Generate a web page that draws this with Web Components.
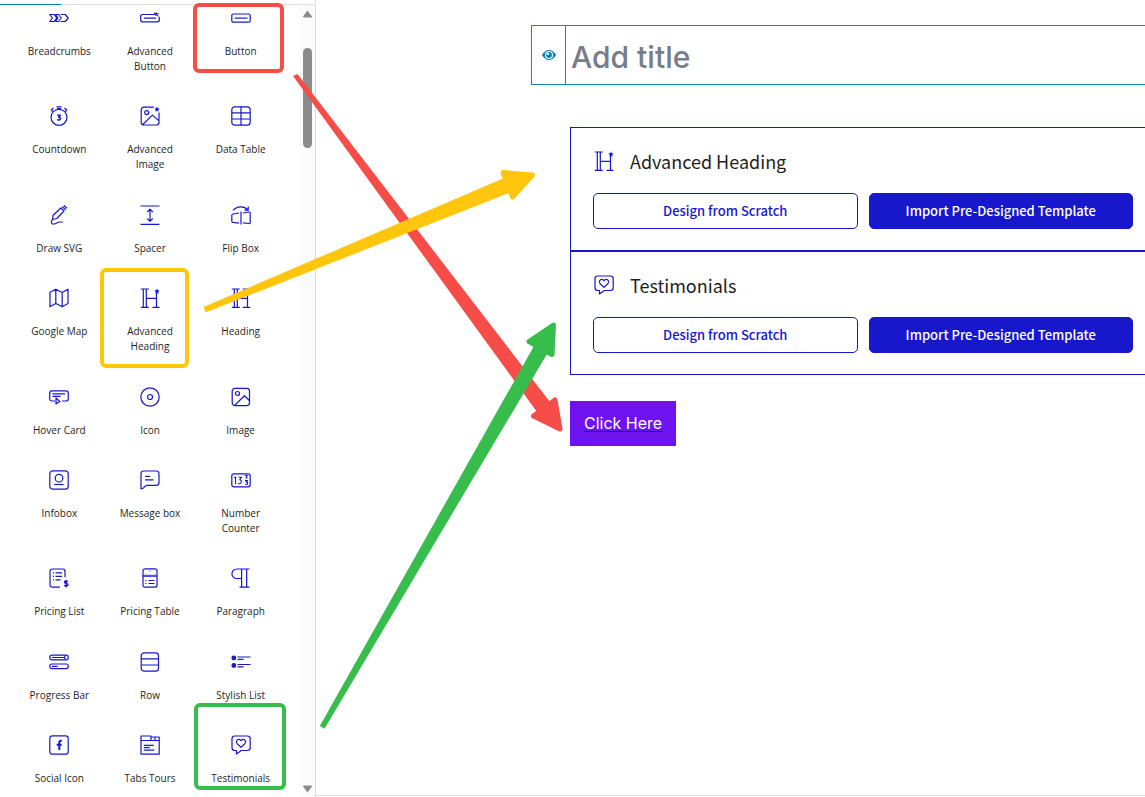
<!DOCTYPE html>
<html lang="en">
<head>
<meta charset="utf-8">
<title>Block editor</title>
<style>
  body { margin: 0; background: #fff; font-family: "Noto Sans CJK SC", sans-serif; color: #1e1e1e; }
</style>
</head>
<body>
<editor-shell>
  <block-panel slot="panel">
    <block-item icon="breadcrumbs">Breadcrumbs</block-item>
    <block-item icon="adv-button">Advanced Button</block-item>
    <block-item icon="button">Button</block-item>
    <block-item icon="countdown">Countdown</block-item>
    <block-item icon="adv-image">Advanced Image</block-item>
    <block-item icon="table">Data Table</block-item>
    <block-item icon="draw">Draw SVG</block-item>
    <block-item icon="spacer">Spacer</block-item>
    <block-item icon="flip">Flip Box</block-item>
    <block-item icon="map">Google Map</block-item>
    <block-item icon="adv-heading">Advanced Heading</block-item>
    <block-item icon="heading">Heading</block-item>
    <block-item icon="hover">Hover Card</block-item>
    <block-item icon="icon">Icon</block-item>
    <block-item icon="image">Image</block-item>
    <block-item icon="infobox">Infobox</block-item>
    <block-item icon="message">Message box</block-item>
    <block-item icon="counter">Number Counter</block-item>
    <block-item icon="price-list">Pricing List</block-item>
    <block-item icon="price-table">Pricing Table</block-item>
    <block-item icon="paragraph">Paragraph</block-item>
    <block-item icon="progress">Progress Bar</block-item>
    <block-item icon="row">Row</block-item>
    <block-item icon="list">Stylish List</block-item>
    <block-item icon="social">Social Icon</block-item>
    <block-item icon="tabs">Tabs Tours</block-item>
    <block-item icon="testimonials">Testimonials</block-item>
  </block-panel>
  <title-field></title-field>
  <starter-block icon="adv-heading">Advanced Heading</starter-block>
  <starter-block icon="testimonials">Testimonials</starter-block>
  <link-button>Click Here</link-button>
</editor-shell>
<callout-layer></callout-layer>

<script>
const STAR = '<path d="M17 .6l.8 1.7 1.9.2-1.4 1.3.4 1.9-1.7-1-1.7 1 .4-1.9-1.4-1.3 1.9-.2z" fill="currentColor" stroke="none"/>';
const HEART = '<path d="M10 12.4L6.2 8.7C4.3 6.600 6 4.300 7.900 4.400 9 4.500 9.600 5.100 10 5.800 10.400 5.100 11 4.500 12.100 4.400 14 4.300 15.700 6.600 13.800 8.700z"/>';
const ICONS = {
  breadcrumbs: '<path d="M.8 6.500H5l2.800 3.500L5 13.500H.8L3.400 10zM6.500 6.500h3l2.800 3.500-2.800 3.500h-3L9 10zM11.500 6.500h4.700L19.200 10l-3 3.500h-4.700"/>',
  'adv-button': '<path d="M14.500 6.500H2.600Q.7 6.500.7 8.500v3.300q0 2 1.900 2h14.800q1.900 0 1.900-2V9M4 10.200h12"/><path d="M14 4.900l4.500 3.500M16.200 4.500v3M18.500 5.500l-4 1.500"/>',
  button: '<rect x=".8" y="6" width="18.400" height="8.200" rx="1.500"/><path d="M3.500 10.100h13"/>',
  countdown: '<circle cx="10" cy="11.300" r="8"/><path d="M7.500.8h5M8 2.500h4M1.800 4.200L4.500 2M18.200 4.200L15.500 2M2.500 5.500l1.500-1M17.500 5.500l-1.500-1"/><path d="M8.300 9.200h3l-1.700 2c2.500 0 2.500 3-.2 2.800l-1.300-.4" stroke-width="1.500"/>',
  'adv-image': '<path d="M14 1.200H4Q1.200 1.200 1.200 4v12.200Q1.200 19 4 19h12.200q2.800 0 2.800-2.800V6.500M3 18.300l9.500-9.200 6.200 5.500"/><circle cx="6.700" cy="6.600" r="2"/>' + STAR,
  table: '<rect x=".8" y=".8" width="18.400" height="18.400" rx="3"/><path d="M.8 6.800h18.400M.8 13h18.400M10 .8v18.400"/>',
  draw: '<path d="M3.500 14.500l.7-4.300L11.800 3l3.200 3-7.200 7.500zM13.200 1.500l3.500 3.200M15 .5l3 2.700M3.500 14.500C1.600 16.300 2 19.300 5 19c2.500-.2 3.200-2 5.700-2h3.300"/>',
  spacer: '<path d="M.5 1h19M.5 19.300h19M10 4.500v11.500M7.300 7L10 4.200 12.700 7M7.300 13.500L10 16.300l2.700-2.800"/>',
  flip: '<path d="M2 5.500C5.500 1 13 .5 16.500 4.500M17.200 1.500v3.700h-3.700M10 6.500v13M8 8L2 9Q.8 9.300.8 10.200v6q0 1 1.200 1.200l6 .8M12 8l6-1q1.200-.1 1.200 1v9.500q0 1.200-1.200 1l-6-.6"/>',
  map: '<path d="M1 4.200L6.800 1.200l6.400 3.300L19 1.200v14.300l-5.800 3.300-6.400-3.300L1 18.800zM6.800 1.200v14.300M13.200 4.500v14.300"/>',
  heading: '<path d="M.8 1h8M.8 19.300h8M3.300 1v18.300M6.300 1v18.300M6.300 10.300h10.200M11.700 1h7.500M11.700 19.300h7.500M16.500 1v18.300"/>',
  'adv-heading': '<path d="M.8 1h8M.8 19.300h8M3.300 1v18.300M6.300 1v18.300M6.300 10.300h10.200M12.500 19.300h7M16.500 5v14.300"/>' + STAR,
  hover: '<path d="M6 14H3Q.7 14 .7 11.700V6.200Q.7 3.900 3 3.900h14q2.300 0 2.300 2.300v5.500q0 2.300-2.300 2.300h-4M3.500 6.800h12.500M3.500 9.300h8M7 11v6l1.800-1.500L11 14.800z"/>',
  icon: '<circle cx="10" cy="10" r="9.200"/><circle cx="10" cy="10" r="2.500"/>',
  image: '<rect x="1.200" y="1.300" width="17.300" height="17.300" rx="2.800"/><path d="M4 18l9.400-9.300 5 4.800"/><circle cx="6.500" cy="6.500" r="2"/>',
  infobox: '<rect x=".8" y=".8" width="18.400" height="18.400" rx="3"/><circle cx="10" cy="8.200" r="3.800"/><path d="M5.300 14.500h9.400"/>',
  message: '<path d="M1 19V3.800Q1 1 3.800 1h12.400Q19 1 19 3.800v8.700q0 2.800-2.800 2.800H7Q4.500 15.500 3.500 18L1 19zM5 6.300h5M5 9.800h8.500"/>',
  counter: '<rect x=".8" y="3.800" width="18.400" height="13" rx="2"/><path d="M3.200 7.800l1.400-.8v7M7.500 7.200h3l-1.800 2.500c2.500 0 2.200 4.200-.4 4l-1.100-.3M14 5.500h2.300L15 8h1.500M14 10.500h2.500l-1.500 1.500h1.500v2.200h-2.300" stroke-width="1.100"/>',
  'price-list': '<path d="M11 19.200H3.200Q1 19.200 1 17V3.200Q1 1 3.200 1h10.600Q16 1 16 3.200v6M6.500 4.800h6.500M6.500 8.300h6.500M6.500 11.800h5M4 4.800h1M4 8.300h1M4 11.800h1"/><path d="M18.900 13.700c-.7-1-3.500-1-3.500.5 0 1.700 3.700.8 3.700 2.600 0 1.600-3 1.700-3.900.4M17.200 12v7.500" stroke-width="1.300"/>',
  'price-table': '<rect x="3" y=".8" width="14" height="18.400" rx="2"/><path d="M3 8.200h14M8.500 12.500h6M8.500 15.500h6M5.300 12.500h1.200M5.300 15.500h1.200M9.500 3h1"/><path d="M3 7.200h14" opacity=".5"/>',
  paragraph: '<path d="M18.500 1H6.200C-.8 1-.8 10.500 6.200 10.500h4.300M10.600 1v18.200M15.700 1v18.200M8.500 19.200h10"/>',
  progress: '<rect x=".8" y="3.200" width="18.400" height="4.600" rx="2"/><rect x=".8" y="12" width="18.400" height="4.600" rx="2"/><path d="M3 5.500h12.500M15.800 3.500v4M3 14.300h5.500"/>',
  row: '<rect x="1.200" y=".8" width="17.300" height="18.400" rx="3"/><path d="M1.200 6.800h17.300M1.200 13h17.300"/>',
  list: '<circle cx="2.800" cy="6" r="1.800" fill="currentColor"/><circle cx="2.800" cy="13.500" r="1.800" fill="currentColor"/><path d="M6.500 5h13M6.500 7.300h6M6.500 12.500h13M6.500 14.800h6"/>',
  social: '<rect x=".8" y=".8" width="18.400" height="18.400" rx="2.500"/><path d="M12.800 5.700h-1c-1 0-1.500.6-1.500 1.600V15M7.700 9.700h5" stroke-width="2"/>',
  tabs: '<path d="M11 5.500V1H1v18.200h18.200V5.500H1M11 2h8.200v3.500M15 2v3.500M3.800 10.300h10M3.800 12.700h6M3.800 15.200h10.500"/>',
  testimonials: '<path d="M4.500 15.500H3.700Q1 15.500 1 12.800V3.700Q1 1 3.700 1h12.600Q19.200 1 19.200 3.700v9.100q0 2.700-2.900 2.700h-6L5.500 19V15.500z"/>' + HEART
};

function shadow(host, html) {
  const root = host.attachShadow({ mode: 'open' });
  const t = document.createElement('template');
  t.innerHTML = html;
  root.append(t.content.cloneNode(true));
  return root;
}

customElements.define('block-icon', class extends HTMLElement {
  connectedCallback() {
    if (this.shadowRoot) return;
    shadow(this, `<style>:host{display:block;width:20px;height:20px;color:#1717cc}svg{display:block}</style>
      <svg width="20" height="20" viewBox="0 0 20 20" fill="none" stroke="currentColor" stroke-width="1.2" stroke-linejoin="round" aria-hidden="true">${ICONS[this.getAttribute('name')] || ''}</svg>`);
  }
});

customElements.define('block-item', class extends HTMLElement {
  connectedCallback() {
    if (this.shadowRoot) return;
    shadow(this, `<style>
      :host{display:block}
      button{display:flex;flex-direction:column;align-items:center;gap:16px;width:100%;margin:0;padding:0 12px;border:0;background:none;color:#1e1e1e;font:10px/15px "Open Sans",sans-serif;cursor:pointer}
      </style><button type="button"><block-icon name="${this.getAttribute('icon')}"></block-icon><span><slot></slot></span></button>`);
  }
});

customElements.define('panel-scrollbar', class extends HTMLElement {
  connectedCallback() {
    if (this.shadowRoot) return;
    shadow(this, `<style>
      :host{display:flex;flex-direction:column;align-items:center;width:15px;background:#fbfbfb;padding:5px 0 4px;box-sizing:border-box}
      svg{display:block}
      .thumb{width:9px;height:100px;margin:30px 0 auto;border-radius:5px;background:#8b8b8b}
      </style>
      <svg width="9" height="8" viewBox="0 0 9 8" fill="#8b8b8b"><path d="M4.500 0.500L9 6.500Q9 7.500 8 7.500H1Q0 7.500 0 6.500z"/></svg>
      <div class="thumb"></div>
      <svg width="9" height="8" viewBox="0 0 9 8" fill="#8b8b8b"><path d="M4.500 7.500L9 1.500Q9 .5 8 .5H1Q0 .5 0 1.500z"/></svg>`);
  }
});

customElements.define('block-panel', class extends HTMLElement {
  connectedCallback() {
    if (this.shadowRoot) return;
    shadow(this, `<style>
      :host{display:flex;flex-direction:column;width:315px;height:100%;border-right:1px solid #ddd}
      .tabs{height:4px;border-bottom:1px solid #ddd;display:flex;align-items:flex-end}
      .tabs i{width:61px;height:1px;margin-bottom:-1px;background:#007cba}
      .scroll{flex:1;display:flex;min-height:0}
      .grid{flex:1;display:grid;grid-template-columns:repeat(3,1fr);align-content:space-between;padding:3px 14px 11px}
      </style>
      <div class="tabs"><i></i></div>
      <div class="scroll"><div class="grid"><slot></slot></div><panel-scrollbar></panel-scrollbar></div>`);
  }
});

customElements.define('title-field', class extends HTMLElement {
  connectedCallback() {
    if (this.shadowRoot) return;
    shadow(this, `<style>
      :host{display:flex;height:58px;border:1px solid #1485b8;margin:0 -12px 42px -39px}
      .eye{width:33px;border-right:1px solid #1485b8;display:flex;align-items:center;justify-content:center;color:#007cba}
      input{flex:1;min-width:0;border:0;outline:0;background:none;padding:3px 5px 0;margin:0;font:500 30px/36px Inter,sans-serif;color:#1e1e1e}
      input::placeholder{color:#767d88;opacity:1}
      </style>
      <div class="eye"><svg width="14" height="14" viewBox="0 0 14 14"><path d="M0 7Q3 2 7 2t7 5Q11 12 7 12T0 7z" fill="currentColor"/><circle cx="7" cy="7" r="3.500" fill="currentColor" stroke="#fff" stroke-width="1.200"/><circle cx="6" cy="6" r="1.200" fill="#fff"/></svg></div>
      <input type="text" placeholder="Add title" aria-label="Add title">`);
  }
});

customElements.define('starter-block', class extends HTMLElement {
  connectedCallback() {
    if (this.shadowRoot) return;
    shadow(this, `<style>
      :host{display:block;border:1px solid #1717cc;padding:18px 22px 21px;margin-right:-11px}
      header{display:flex;align-items:center;gap:16px;height:30px;padding-left:1px;margin-bottom:17px}
      h2{margin:0;font-size:18px;font-weight:400;line-height:30px}
      .actions{display:grid;grid-template-columns:1fr 1fr;gap:11px}
      button{height:36px;margin:0;padding:0;border:1px solid #1717cc;border-radius:5px;background:#fff;color:#1717cc;font:500 13px/20px "Noto Sans CJK SC",sans-serif;cursor:pointer}
      button.primary{background:#1717cc;color:#fff}
      </style>
      <header><block-icon name="${this.getAttribute('icon')}"></block-icon><h2><slot></slot></h2></header>
      <div class="actions"><button type="button">Design from Scratch</button><button type="button" class="primary">Import Pre-Designed Template</button></div>`);
  }
});

customElements.define('link-button', class extends HTMLElement {
  connectedCallback() {
    if (this.shadowRoot) return;
    shadow(this, `<style>
      :host{display:block;margin-top:26px}
      a{display:inline-block;padding:12px 14px;background:#6e12f0;color:#fff;font:16px/21px Inter,sans-serif;text-decoration:underline #1a0a6b 1px;text-underline-offset:2px}
      </style><a href="#"><slot></slot></a>`);
  }
});

customElements.define('editor-shell', class extends HTMLElement {
  connectedCallback() {
    if (this.shadowRoot) return;
    shadow(this, `<style>
      :host{display:grid;grid-template-columns:316px minmax(0,1fr);grid-template-rows:minmax(0,1fr);min-height:100vh}
      main{overflow:hidden;padding:25px 0 0 254px;border-bottom:1px solid #ddd;margin-bottom:1px}
      </style><slot name="panel"></slot><main><slot></slot></main>`);
  }
});

customElements.define('callout-layer', class extends HTMLElement {
  connectedCallback() {
    if (this.shadowRoot) return;
    const arrow = (c, shaft, head) => `<path fill="${c}" d="${shaft}"/><path fill="${c}" stroke="${c}" stroke-width="5" stroke-linejoin="round" d="${head}"/>`;
    shadow(this, `<style>:host{position:absolute;top:0;left:0;pointer-events:none}svg{display:block}</style>
      <svg width="570" height="795" viewBox="0 0 570 795" aria-hidden="true">
        <g fill="none" stroke-width="4">
          <rect x="195" y="5" width="87" height="66" rx="4" stroke="#f74d48"/>
          <rect x="102" y="270" width="85" height="96" rx="4" stroke="#ffc60d"/>
          <rect x="196" y="705" width="88" height="83" rx="4" stroke="#37bd4b"/>
        </g>
        ${arrow('#f74d48', 'M293 76L297.500 74 550 402 537 412z', 'M533.500 416L555 400 560 429z')}
        ${arrow('#ffc60d', 'M203.500 307L205.500 312.500 509 193 503 178.500z', 'M503 172.500L512.500 197 532.500 175z')}
        ${arrow('#37bd4b', 'M319.800 726L324.500 728.700 547 354 534 346z', 'M529 341.500L552 354.500 553.500 325z')}
      </svg>`);
  }
});
</script>
</body>
</html>
